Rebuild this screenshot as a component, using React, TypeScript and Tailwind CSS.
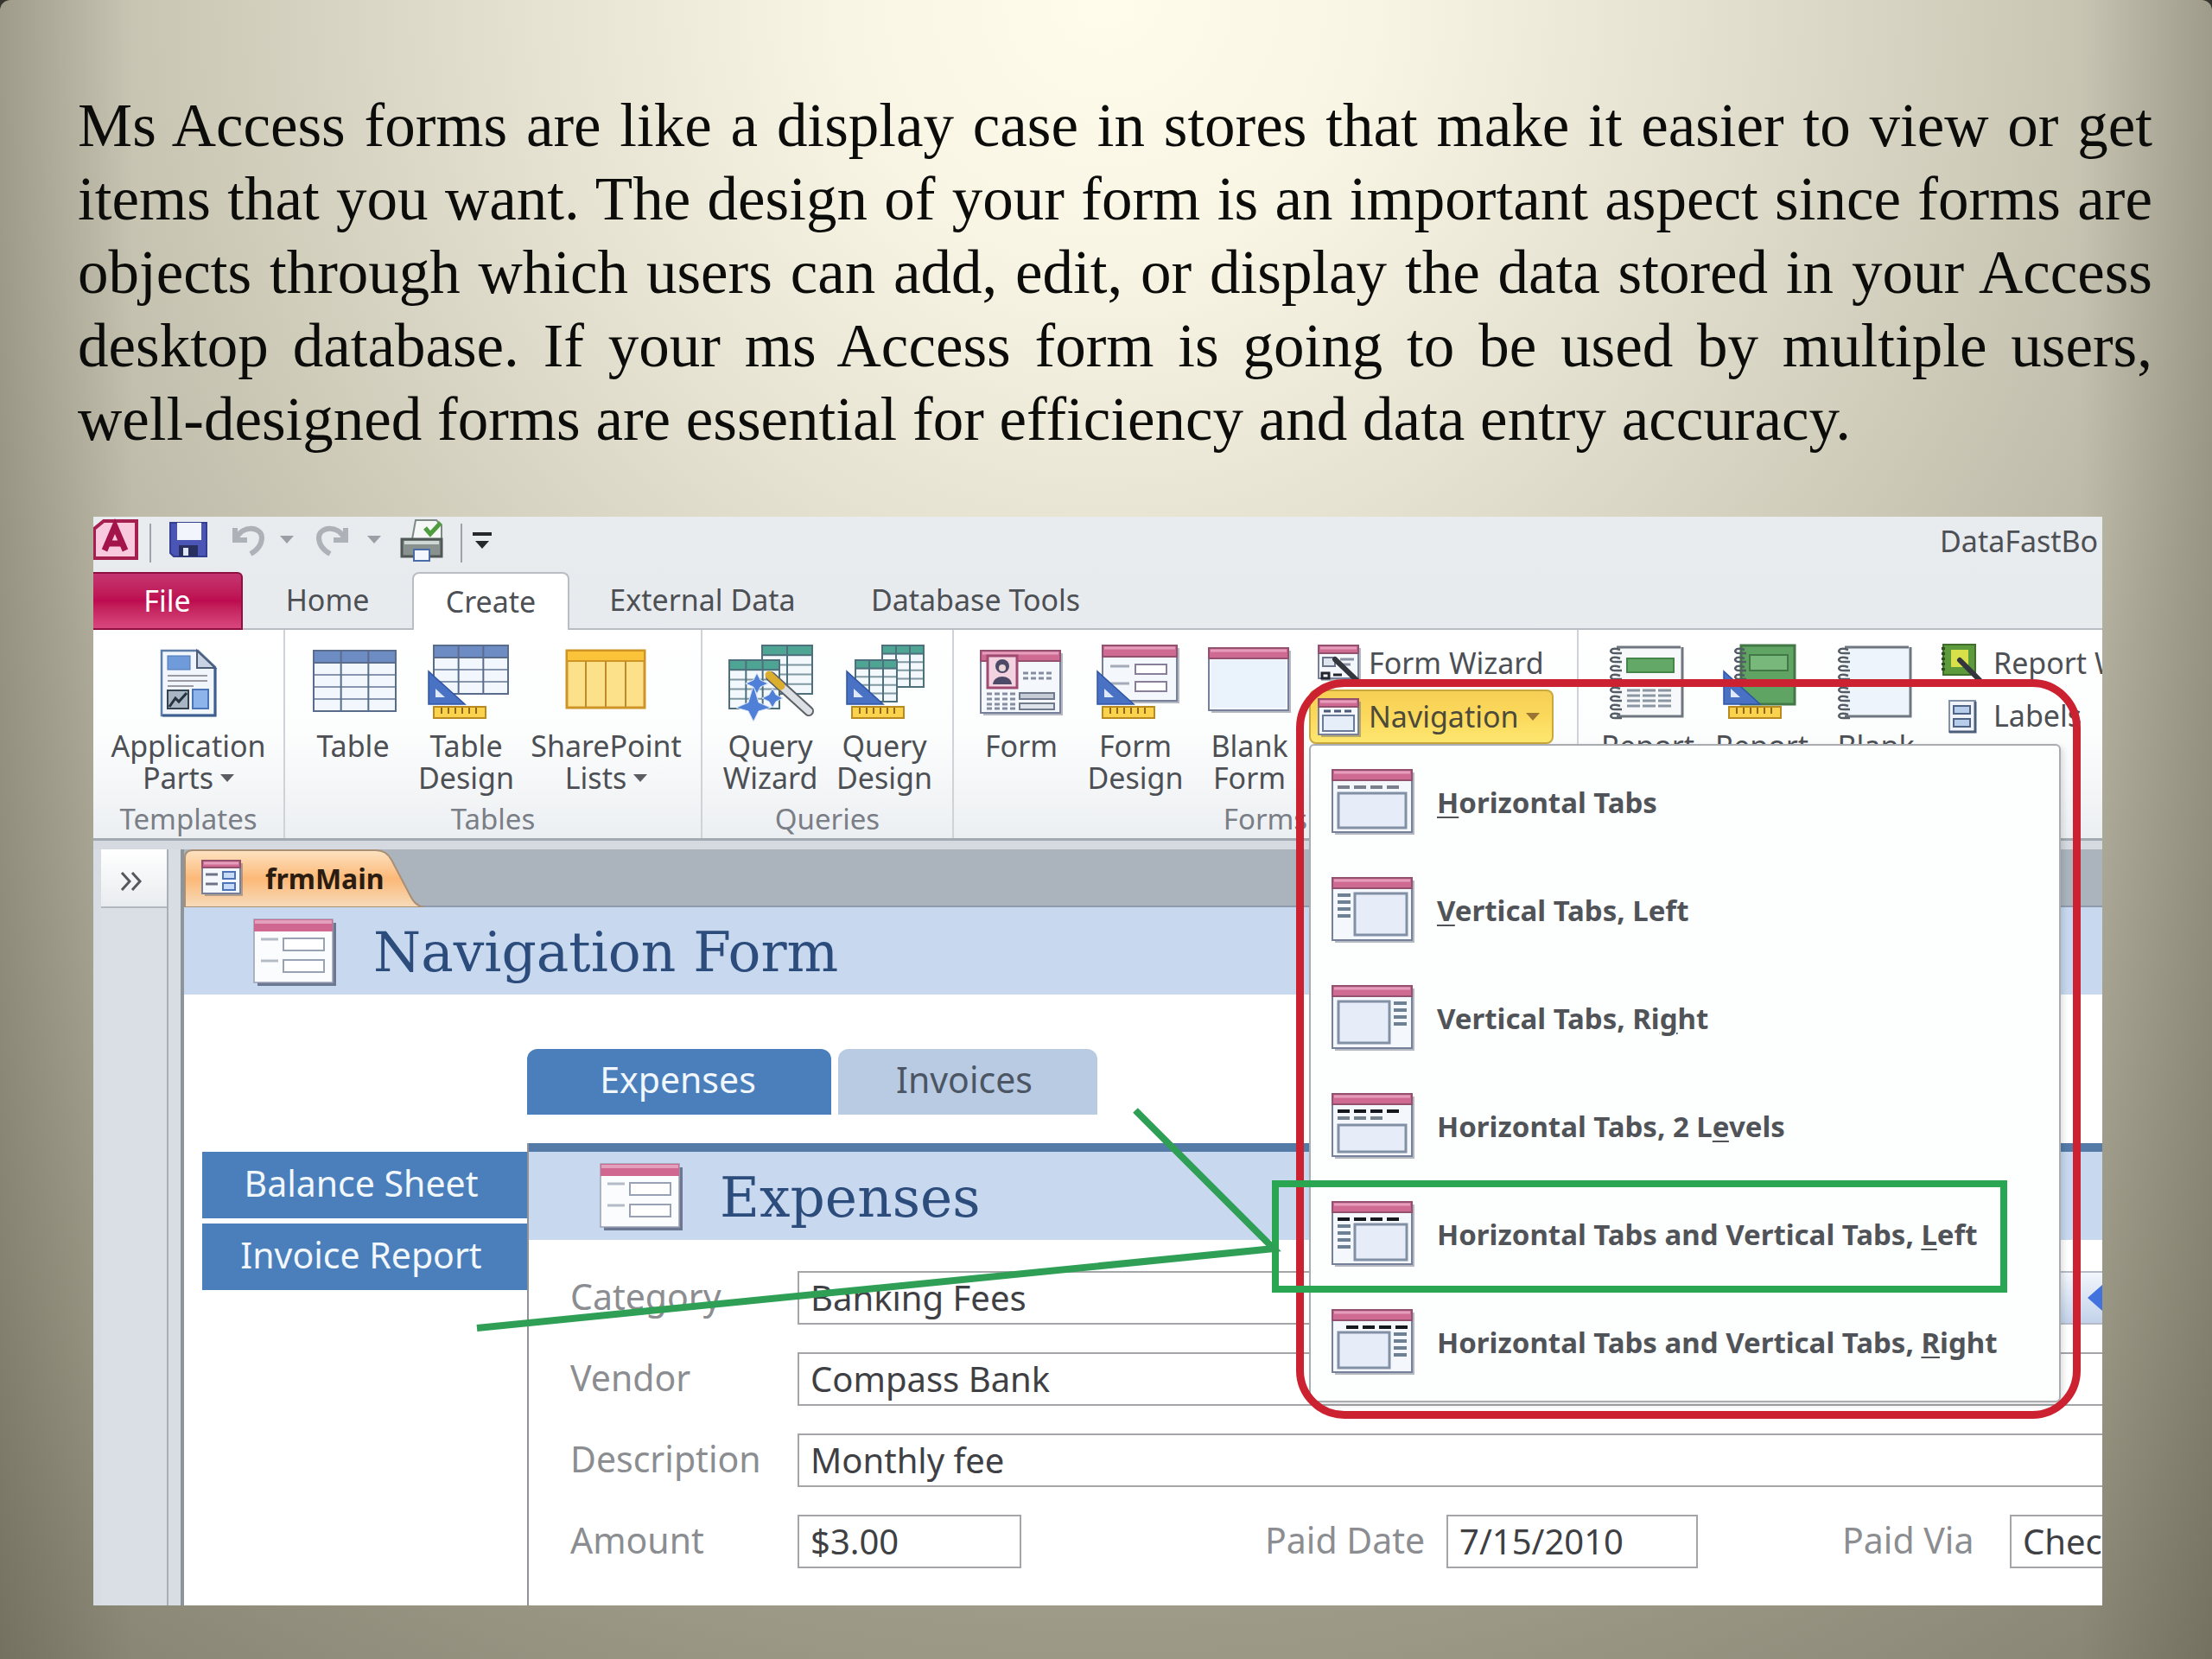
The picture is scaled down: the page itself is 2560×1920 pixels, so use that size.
import { useState, type ReactNode } from "react";

/* ---------- drawings ---------- */

function Grid({ x, y, w, h, cols, rows, head, line, body }: { x: number; y: number; w: number; h: number; cols: number; rows: number; head: string; line: string; body: string }) {
  const hh = h / (rows + 1);
  return (
    <g stroke={line} strokeWidth="2">
      <rect x={x} y={y} width={w} height={h} fill={body} />
      <rect x={x} y={y} width={w} height={hh} fill={head} />
      {Array.from({ length: cols - 1 }, (_, i) => (
        <path key={`c${i}`} d={`M${x + ((i + 1) * w) / cols} ${y}v${h}`} />
      ))}
      {Array.from({ length: rows - 1 }, (_, i) => (
        <path key={`r${i}`} d={`M${x} ${y + hh * (i + 2)}h${w}`} strokeOpacity="0.7" />
      ))}
    </g>
  );
}

function Ruler({ x }: { x: number }) {
  return (
    <g>
      <path d={`M${x - 6} 32v38h42z`} fill="#4a72c4" stroke="#2f55a4" strokeWidth="1.5" />
      <path d={`M${x + 2} 52v10h11z`} fill="#dfe9fb" />
      <rect x={x} y="73" width="60" height="13" fill="#fbd24e" stroke="#b98a1d" strokeWidth="2" />
      <path d={`M${x + 9} 74v7m8 -7v7m8 -7v7m8 -7v7m8 -7v7m8 -7v7`} stroke="#8c6a1a" strokeWidth="2" />
    </g>
  );
}

function Pink({ x, y, w, h, head }: { x: number; y: number; w: number; h: number; head: number }) {
  return (
    <g>
      <rect x={x + 3} y={y + 3} width={w} height={h} fill="#5b6478" opacity="0.45" />
      <rect x={x} y={y} width={w} height={h} fill="#f4f7fc" stroke="#76809a" strokeWidth="2" />
      <rect x={x} y={y} width={w} height={head} fill="#cf6b93" stroke="#94506f" strokeWidth="2" />
      <path d={`M${x + 2} ${y + 3}h${w - 4}`} stroke="#e59dbb" strokeWidth="3" />
    </g>
  );
}

const Big = ({ children }: { children: ReactNode }) => (
  <svg viewBox="0 0 104 90" className="h-[90px] w-[104px]" fill="none" aria-hidden="true">
    {children}
  </svg>
);

const AppPartsIcon = () => (
  <Big>
    <path d="M21 8h42l20 19v56H21z" fill="#f1f6fd" stroke="#5e7ea8" strokeWidth="2.5" />
    <path d="M62 8v20h21z" fill="#c9d3e4" stroke="#4c5b78" strokeWidth="2" />
    <path d="M83 28v55H22" stroke="#3d5f8f" strokeWidth="3" />
    <rect x="28" y="14" width="26" height="16" fill="#6f9bdb" stroke="#4a74b5" />
    <path d="M28 37h46M28 43h46M28 49h30" stroke="#9a9aa4" strokeWidth="2" />
    <rect x="28" y="54" width="24" height="21" fill="#a8b6c4" stroke="#34414f" strokeWidth="2" />
    <path d="M30 73l7-10 4 4 9-10" stroke="#26323d" strokeWidth="3" />
    <rect x="57" y="53" width="18" height="22" fill="#8db5ec" stroke="#4a74b5" strokeWidth="2" />
  </Big>
);
const TableIcon = () => (
  <Big><Grid x={6} y={8} w={95} h={70} cols={3} rows={4} head="#6d8cc4" line="#5a6c8c" body="#f2f7fd" /></Big>
);
const TableDesignIcon = () => (
  <Big>
    <Grid x={14} y={2} w={86} h={56} cols={3} rows={3} head="#6d8cc4" line="#5a6c8c" body="#f2f7fd" />
    <Ruler x={14} />
  </Big>
);
const SharePointIcon = () => (
  <Big>
    <rect x="6" y="8" width="90" height="66" fill="#fde08a" stroke="#cf9426" strokeWidth="3" />
    <rect x="6" y="8" width="90" height="12" fill="#fbc33a" stroke="#cf9426" strokeWidth="2" />
    <path d="M28 20v53M51 20v53M74 20v53" stroke="#c08a2a" strokeWidth="2" />
  </Big>
);
const QueryWizardIcon = () => (
  <Big>
    <Grid x={42} y={2} w={58} h={56} cols={2} rows={4} head="#4fa593" line="#4e6f7c" body="#f2f8fb" />
    <Grid x={4} y={19} w={58} h={56} cols={3} rows={4} head="#4fa593" line="#4e6f7c" body="#f2f8fb" />
    <path d="M32 48l6 20 14 6-14 4-6 12-6-12-14-4 14-6z" fill="#4f7fd6" stroke="#d8e6fb" />
    <path d="M36 34l4 8 9 4-9 4-4 8-4-8-9-4 9-4z" fill="#4f7fd6" stroke="#d8e6fb" />
    <path d="M54 52l4 7 8 4-8 4-4 7-4-7-8-4 8-4z" fill="#4f7fd6" stroke="#d8e6fb" />
    <path d="M52 38l44 40" stroke="#5b5f66" strokeWidth="12" strokeLinecap="round" />
    <path d="M52 38l44 40" stroke="#dcdfe4" strokeWidth="8" strokeLinecap="round" />
    <path d="M50 36l14 13" stroke="#dcae2e" strokeWidth="9" strokeLinecap="round" />
  </Big>
);
const QueryDesignIcon = () => (
  <Big>
    <Grid x={49} y={2} w={48} h={48} cols={3} rows={4} head="#4fa593" line="#4e6f7c" body="#f2f8fb" />
    <Grid x={18} y={19} w={48} h={48} cols={3} rows={4} head="#4fa593" line="#4e6f7c" body="#f2f8fb" />
    <Ruler x={14} />
  </Big>
);
const FormIcon = () => (
  <Big>
    <Pink x={5} y={8} w={92} h={72} head={12} />
    <rect x="13" y="14" width="34" height="37" fill="#f3d3e0" stroke="#a04a72" strokeWidth="3" />
    <circle cx="30" cy="26" r="8" fill="#4c4a66" />
    <circle cx="30" cy="28" r="4" fill="#e9d5d8" />
    <path d="M19 47c1-12 21-12 22 0z" fill="#4c4a66" />
    <path d="M54 34h34M54 40h34M12 58h34M12 64h34M12 70h34M12 75h34" stroke="#858da0" strokeWidth="3" strokeDasharray="6 3" />
    <rect x="50" y="57" width="40" height="7" fill="#c7cdd6" stroke="#6f7a8c" strokeWidth="2" />
    <rect x="50" y="69" width="40" height="7" fill="#dfe4ea" stroke="#6f7a8c" strokeWidth="2" />
  </Big>
);
const FormDesignIcon = () => (
  <Big>
    <Pink x={14} y={2} w={86} h={64} head={13} />
    <path d="M23 26h22M23 46h22" stroke="#a3aab8" strokeWidth="3" />
    <rect x="52" y="24" width="36" height="11" fill="#fff" stroke="#8a7f9a" strokeWidth="2" />
    <rect x="52" y="44" width="36" height="11" fill="#fff" stroke="#8a7f9a" strokeWidth="2" />
    <Ruler x={14} />
  </Big>
);
const BlankFormIcon = () => (
  <Big>
    <Pink x={5} y={5} w={92} h={72} head={12} />
    <rect x="8" y="19" width="86" height="55" fill="#eaf2fc" />
  </Big>
);

function Spiral() {
  return (
    <g stroke="#545c66" strokeWidth="2.5">
      {[7, 17, 27, 37, 52, 62, 72, 82].map((y) => (
        <path key={y} d={`M20 ${y}c-12 -4 -14 4 -6 4h8`} />
      ))}
    </g>
  );
}
const ReportIcon = () => (
  <Big>
    <path d="M16 4h76v80H16" fill="#f6f8fa" />
    <path d="M16 4h74M16 84h76V4" stroke="#6f7680" strokeWidth="3" />
    <rect x="28" y="17" width="54" height="16" fill="#63a866" stroke="#45854a" strokeWidth="2" />
    <path d="M28 46h52M28 54h52M28 60h52M28 66h52M28 72h52" stroke="#8c95a2" strokeWidth="3" strokeDasharray="15 3" />
    <Spiral />
  </Big>
);
const ReportDesignIcon = () => (
  <Big>
    <rect x="28" y="2" width="62" height="68" fill="#5fa463" stroke="#427846" strokeWidth="3" />
    <rect x="38" y="13" width="44" height="18" fill="#78b87a" stroke="#427846" strokeWidth="2" />
    <g transform="translate(12 0)" stroke="#545c66" strokeWidth="2.5">
      {[7, 17, 27, 37].map((y) => (
        <path key={y} d={`M20 ${y}c-12 -4 -14 4 -6 4h8`} />
      ))}
    </g>
    <Ruler x={14} />
  </Big>
);
const BlankReportIcon = () => (
  <Big>
    <path d="M16 4h76v80H16" fill="#eef4fb" />
    <path d="M16 4h74M16 84h76V4" stroke="#6f7680" strokeWidth="3" />
    <Spiral />
  </Big>
);

const FormWizardIcon = () => (
  <svg viewBox="0 0 50 46" className="h-[46px] w-[50px]" fill="none" aria-hidden="true">
    <Pink x={1} y={2} w={46} h={38} head={9} />
    <rect x="6" y="16" width="14" height="10" fill="#dfe5ee" stroke="#6b7488" strokeWidth="2" />
    <path d="M26 18h16M26 24h12" stroke="#8a92a4" strokeWidth="3" />
    <path d="M5 34h8v6H5zM18 36h10" stroke="#22252c" strokeWidth="3" />
    <path d="M20 18l27 26" stroke="#33363c" strokeWidth="6" strokeLinecap="round" />
  </svg>
);
const NavSmallIcon = () => (
  <svg viewBox="0 0 50 46" className="h-[46px] w-[50px]" fill="none" aria-hidden="true">
    <Pink x={1} y={2} w={46} h={41} head={9} />
    <path d="M7 16h34" stroke="#4a5a78" strokeWidth="3" strokeDasharray="8 4" />
    <rect x="6" y="21" width="36" height="18" fill="#e6eefa" stroke="#6b7c9a" strokeWidth="2" />
  </svg>
);
const ReportWizardIcon = () => (
  <svg viewBox="0 0 50 46" className="h-[46px] w-[50px]" fill="none" aria-hidden="true">
    <rect x="4" y="2" width="37" height="35" fill="#5d9a3c" stroke="#3f6f2a" strokeWidth="2" />
    <rect x="13" y="8" width="20" height="20" fill="#d8e04a" />
    <path d="M4 5v30" stroke="#2f4f20" strokeWidth="4" strokeDasharray="3 3" />
    <path d="M23 20l23 23" stroke="#33363c" strokeWidth="6" strokeLinecap="round" />
  </svg>
);
const LabelsIcon = () => (
  <svg viewBox="0 0 50 46" className="h-[46px] w-[50px]" fill="none" aria-hidden="true">
    <rect x="11" y="5" width="30" height="36" fill="#f0f4fa" stroke="#8091a8" strokeWidth="2" />
    <path d="M41 6v35H11" stroke="#4c5f7a" strokeWidth="3" />
    <rect x="16" y="11" width="19" height="9" fill="#b8cdea" stroke="#4e6486" strokeWidth="2" />
    <rect x="16" y="26" width="19" height="9" fill="#b8cdea" stroke="#4e6486" strokeWidth="2" />
  </svg>
);

type Layout = { tabs?: number[]; tabs2?: number[]; rows?: [number, number, number]; box: [number, number, number, number]; dark?: boolean };
function LayoutIcon({ tabs, tabs2, rows, box, dark }: Layout) {
  return (
    <svg viewBox="0 0 96 78" className="h-[78px] w-24" fill="none" aria-hidden="true">
      <Pink x={1} y={1} w={92} h={72} head={12} />
      {tabs?.map((x) => <path key={x} d={`M${x} 21h14`} stroke={dark ? "#15181f" : "#7a7f8e"} strokeWidth="4" />)}
      {tabs2?.map((x) => <path key={x} d={`M${x} 29h14`} stroke="#76828e" strokeWidth="4" />)}
      {rows &&
        Array.from({ length: rows[2] }, (_, i) => (
          <path key={i} d={`M${rows[0]} ${rows[1] + i * 8}h15`} stroke="#6d8094" strokeWidth="4" />
        ))}
      <rect x={box[0]} y={box[1]} width={box[2]} height={box[3]} fill="#e6edf8" stroke="#8290a6" strokeWidth="3" />
    </svg>
  );
}

const HeaderFormIcon = () => (
  <svg viewBox="0 0 100 80" className="h-20 w-[100px]" fill="none" aria-hidden="true">
    <rect x="7" y="6" width="91" height="73" fill="#44506a" opacity="0.7" />
    <rect x="3" y="2" width="91" height="73" fill="#fbfcfe" stroke="#9aa0b4" strokeWidth="1.5" />
    <rect x="3" y="2" width="91" height="14" fill="#cf6790" />
    <path d="M4 5h89" stroke="#e3a0bb" strokeWidth="4" />
    <path d="M11 25h20M11 50h20" stroke="#b4bac6" strokeWidth="3" />
    <rect x="37" y="24" width="47" height="14" fill="#fff" stroke="#98a2b4" strokeWidth="2" />
    <rect x="37" y="49" width="47" height="14" fill="#fff" stroke="#98a2b4" strokeWidth="2" />
  </svg>
);

const Caret = ({ color = "#5a5d62" }: { color?: string }) => (
  <svg viewBox="0 0 16 9" className="h-[9px] w-4 shrink-0" aria-hidden="true">
    <path d="M0 0h16l-8 9z" fill={color} />
  </svg>
);

/* ---------- ribbon ---------- */

function BigButton({ icon, lines, width, caret }: { icon: ReactNode; lines: string[]; width: string; caret?: boolean }) {
  return (
    <button type="button" className={`flex ${width} shrink-0 flex-col items-center whitespace-nowrap pt-[16px] text-[34px] leading-[37px] text-[#4c4f54]`}>
      {icon}
      <span className="mt-[10px]">{lines[0]}</span>
      {lines[1] && (
        <span className="flex items-center gap-2">
          {lines[1]}
          {caret && <Caret />}
        </span>
      )}
    </button>
  );
}

function Group({ label, width, children }: { label: string; width: string; children: ReactNode }) {
  return (
    <section aria-label={label} className={`flex ${width} shrink-0 flex-col border-r-2 border-[#cfd3d8]`}>
      <div className="flex h-[197px] justify-center">{children}</div>
      <h3 className="text-center text-[33px] leading-[44px] text-[#7a7e86]">{label}</h3>
    </section>
  );
}

const MENU: { before: string; key: string; after: string; icon: Layout }[] = [
  { before: "", key: "H", after: "orizontal Tabs", icon: { tabs: [7, 26, 45, 64], box: [8, 28, 78, 40] } },
  { before: "", key: "V", after: "ertical Tabs, Left", icon: { rows: [7, 21, 4], box: [27, 19, 60, 48] } },
  { before: "Vertical Tabs, Ri", key: "g", after: "ht", icon: { rows: [72, 21, 4], box: [8, 19, 59, 48] } },
  { before: "Horizontal Tabs, 2 L", key: "e", after: "vels", icon: { tabs: [7, 26, 45, 64], dark: true, tabs2: [7, 26, 45], box: [8, 37, 78, 31] } },
  { before: "Horizontal Tabs and Vertical Tabs, ", key: "L", after: "eft", icon: { tabs: [7, 26, 45, 64], dark: true, rows: [7, 29, 4], box: [27, 27, 60, 41] } },
  { before: "Horizontal Tabs and Vertical Tabs, ", key: "R", after: "ight", icon: { tabs: [17, 36, 55, 74], dark: true, rows: [72, 29, 4], box: [8, 27, 59, 41] } },
];

function NavigationMenu() {
  return (
    <div className="relative z-10">
      <button type="button" aria-haspopup="menu" aria-expanded="true" className="flex h-[63px] w-[283px] items-center rounded-lg border-2 border-[#c9a93c] bg-linear-to-b from-[#f6cf55] via-[#fbd95c] to-[#fde76f] pl-[8px] text-[34px] text-[#4c4a3a]">
        <NavSmallIcon />
        <span className="mr-2 ml-[9px]">Navigation</span>
        <Caret color="#9a7433" />
      </button>
      <ul role="menu" className="absolute top-full left-0 h-[762px] w-[870px] rounded-md border-2 border-[#a9adb2] bg-[#fdfefe] pt-[3px] shadow-[3px_3px_6px_rgba(0,0,0,0.12)]">
        {MENU.map((m) => (
          <li key={m.before + m.key + m.after} role="none">
            <button type="button" role="menuitem" className="flex h-[125px] w-full items-center pl-[24px] text-left text-[33px] font-bold whitespace-nowrap text-[#505357]">
              <LayoutIcon {...m.icon} />
              <span className="ml-[26px]">
                {m.before}
                <u className="underline decoration-2 underline-offset-4">{m.key}</u>
                {m.after}
              </span>
            </button>
          </li>
        ))}
      </ul>
    </div>
  );
}

function Ribbon() {
  return (
    <div className="flex h-[244px] border-b-[3px] border-[#a4aab1] bg-linear-to-b from-white via-[#fcfdfd] to-[#eceff2]">
      <Group label="Templates" width="w-[222px]">
        <BigButton icon={<AppPartsIcon />} lines={["Application", "Parts"]} width="w-[220px]" caret />
      </Group>
      <Group label="Tables" width="w-[483px]">
        <BigButton icon={<TableIcon />} lines={["Table"]} width="w-[132px]" />
        <BigButton icon={<TableDesignIcon />} lines={["Table", "Design"]} width="w-[130px]" />
        <BigButton icon={<SharePointIcon />} lines={["SharePoint", "Lists"]} width="w-[194px]" caret />
      </Group>
      <Group label="Queries" width="w-[291px]">
        <BigButton icon={<QueryWizardIcon />} lines={["Query", "Wizard"]} width="w-[132px]" />
        <BigButton icon={<QueryDesignIcon />} lines={["Query", "Design"]} width="w-[132px]" />
      </Group>
      <Group label="Forms" width="w-[723px]">
        <BigButton icon={<FormIcon />} lines={["Form"]} width="w-[132px]" />
        <BigButton icon={<FormDesignIcon />} lines={["Form", "Design"]} width="w-[132px]" />
        <BigButton icon={<BlankFormIcon />} lines={["Blank", "Form"]} width="w-[132px]" />
        <div className="ml-[3px] flex w-[298px] flex-col">
          <button type="button" className="mt-[10px] flex h-[59px] items-center gap-[9px] pb-[2px] pl-[10px] text-[34px] whitespace-nowrap text-[#4c4f54]">
            <FormWizardIcon />
            Form Wizard
          </button>
          <NavigationMenu />
        </div>
      </Group>
      <section aria-label="Reports" className="flex pl-[14px]">
        <BigButton icon={<ReportIcon />} lines={["Report"]} width="w-[132px]" />
        <BigButton icon={<ReportDesignIcon />} lines={["Report", "Design"]} width="w-[132px]" />
        <BigButton icon={<BlankReportIcon />} lines={["Blank", "Report"]} width="w-[132px]" />
        <div className="ml-[8px] flex flex-col text-[34px] whitespace-nowrap text-[#4c4f54]">
          <button type="button" className="mt-[8px] flex h-[60px] items-center gap-[12px]">
            <ReportWizardIcon />
            Report Wizard
          </button>
          <button type="button" className="flex h-[63px] items-center gap-[12px]">
            <LabelsIcon />
            Labels
          </button>
        </div>
      </section>
    </div>
  );
}

function TitleBar() {
  return (
    <div className="flex h-16 items-center">
      <svg viewBox="0 0 480 64" className="h-16 w-[480px]" fill="none" aria-hidden="true">
        <path d="M12 5h38v43H1V14z" fill="#f9c9dd" stroke="#a5204f" strokeWidth="4" />
        <path d="M13 39l12-28 12 28M17 31h16" stroke="#a3154a" strokeWidth="7" />
        <path d="M66 8v45M426 8v45" stroke="#9ca3ab" strokeWidth="2" />
        <path d="M89 7h42v39H93l-4-4z" fill="#4a55b5" stroke="#343f92" strokeWidth="2" />
        <path d="M97 7h28v20H97z" fill="#f2f5fc" />
        <path d="M99 33h22v13H99z" fill="#27305f" />
        <path d="M104 36h6v9h-6z" fill="#dfe6f7" />
        <path d="M164 13v14h14M165 26c8-18 30-14 30-2 0 8-4 14-13 19" stroke="#adb2b8" strokeWidth="6" />
        <path d="M292 13v14h-14M291 26c-8-18-30-14-30-2 0 8 4 14 13 19" stroke="#adb2b8" strokeWidth="6" />
        <path d="M216 22h16l-8 9zM317 22h16l-8 9z" fill="#9ba0a6" />
        <path d="M373 4h24l6 6v16h-34z" fill="#f5f8f6" stroke="#7d8a84" strokeWidth="2" />
        <path d="M384 13l6 7 12-13" stroke="#4f9d3e" strokeWidth="5" />
        <path d="M357 26h46v20h-46z" fill="#8a928f" stroke="#4f5856" strokeWidth="3" />
        <path d="M360 30h40" stroke="#cfd6d3" strokeWidth="4" />
        <rect x="371" y="38" width="18" height="13" fill="#f3f7ff" stroke="#4a6da8" strokeWidth="2" />
        <path d="M439 20h22" stroke="#26282b" strokeWidth="4" />
        <path d="M442 28h16l-8 9z" fill="#26282b" />
      </svg>
      <span className="mb-2 ml-auto w-[188px] overflow-hidden text-[34px] whitespace-nowrap text-[#4c4f54]">DataFastBo</span>
    </div>
  );
}

const TABS: [string, string][] = [
  ["Home", "w-[196px]"],
  ["Create", "w-[182px]"],
  ["External Data", "w-[308px]"],
  ["Database Tools", "w-[324px]"],
];

function RibbonTabs() {
  return (
    <nav className="flex h-[67px] text-[34px] whitespace-nowrap text-[#4c4f54]">
      <button type="button" className="w-[173px] rounded-tr-md border-2 border-l-0 border-[#8f0f42] bg-linear-to-b from-[#c43470] via-[#bd0a50] to-[#d8467e] text-white">
        File
      </button>
      {TABS.map(([t, w]) => (
        <button key={t} type="button" className={`${w} border-[#b9bec4] ${t === "Create" ? "rounded-t-lg border-x-2 border-t-2 bg-white" : "border-b-2"}`}>
          {t}
        </button>
      ))}
      <span className="flex-1 border-b-2 border-[#b9bec4]" />
    </nav>
  );
}

/* ---------- form ---------- */

const labelCls = "shrink-0 text-[41px] leading-[58px] text-[#8b8d91]";
const inputCls = "h-[62px] min-w-0 border-2 border-[#a3a5a8] bg-white pb-[2px] pl-[13px] text-[40px] text-[#3e4043] outline-none";

function Field({ id, label, value, children }: { id: string; label: string; value: string; children?: ReactNode }) {
  const [v, setV] = useState(value);
  return (
    <div className="flex">
      <label htmlFor={id} className={`${labelCls} w-[263px]`}>{label}</label>
      <input id={id} value={v} onChange={(e) => setV(e.target.value)} className={`${inputCls} ${id === "amount" ? "w-[259px]" : "-mr-1 flex-1"}`} />
      {children}
    </div>
  );
}

function ExpensesForm() {
  return (
    <div className="flex flex-col gap-8 pt-9 pl-[48px]">
      <Field id="category" label="Category" value="Banking Fees">
        <button type="button" aria-label="Previous" className="flex h-[62px] w-[60px] items-center justify-end border-y-2 border-[#b5bcc8] bg-linear-to-b from-[#f2f6fc] to-[#c3d2ea]">
          <svg viewBox="0 0 17 32" className="h-8 w-[17px]" aria-hidden="true">
            <path d="M0 16L17 1v30z" fill="#4272dd" />
          </svg>
        </button>
      </Field>
      <Field id="vendor" label="Vendor" value="Compass Bank" />
      <Field id="description" label="Description" value="Monthly fee" />
      <Field id="amount" label="Amount" value="$3.00">
        <label htmlFor="paid-date" className={`${labelCls} ml-[282px] w-[210px]`}>Paid Date</label>
        <input id="paid-date" defaultValue="7/15/2010" className={`${inputCls} w-[291px]`} />
        <label htmlFor="paid-via" className={`${labelCls} ml-[167px] w-[194px]`}>Paid Via</label>
        <input id="paid-via" defaultValue="Check" className={`${inputCls} flex-1 border-r-0`} />
      </Field>
    </div>
  );
}

function Document() {
  return (
    <div className="flex flex-1 border-t-[10px] border-[#d5dae0] bg-[#d8dde3]">
      <aside className="flex w-[105px] shrink-0 border-r-4 border-[#8d949b] pr-[14px] pl-[9px]">
        <div className="flex flex-1 flex-col border-r-2 border-[#a9afb6] bg-[#dadfe6]">
          <button type="button" aria-label="Open navigation pane" className="flex h-[68px] items-center justify-center border-b-2 border-[#b2b8bf] bg-linear-to-b from-white to-[#e9ecef] pt-2 pr-1">
            <svg viewBox="0 0 28 22" className="h-[22px] w-7" fill="none" stroke="#55585d" strokeWidth="3" aria-hidden="true">
              <path d="M2 1l9 10-9 10M14 1l9 10-9 10" />
            </svg>
          </button>
        </div>
      </aside>
      <div className="flex min-w-0 flex-1 flex-col bg-white">
        <div className="h-[67px] border-b-2 border-[#8f9bad] bg-[#abb3bd]">
          <button type="button" className="relative flex h-[67px] w-[278px] items-center text-[32px] font-bold text-[#2a1c10]">
            <svg viewBox="0 0 278 67" className="absolute inset-0 h-[67px] w-[278px]" aria-hidden="true">
              <defs>
                <linearGradient id="docTab" x1="0" y1="0" x2="0" y2="1">
                  <stop offset="0" stopColor="#fde3c2" />
                  <stop offset="0.5" stopColor="#fcb877" />
                  <stop offset="1" stopColor="#f6dcbc" />
                </linearGradient>
              </defs>
              <path d="M1 67V10Q1 1 10 1H222Q234 1 240 12L262 54Q268 66 278 67z" fill="url(#docTab)" stroke="#a98f73" strokeWidth="2" />
            </svg>
            <svg viewBox="0 0 50 44" className="relative ml-5 h-11 w-[50px]" fill="none" aria-hidden="true">
              <Pink x={1} y={1} w={44} h={38} head={8} />
              <path d="M5 17h14M5 28h14" stroke="#6c7486" strokeWidth="3" />
              <rect x="25" y="14" width="14" height="8" fill="#c9dcf7" stroke="#4d73b8" strokeWidth="2" />
              <rect x="25" y="27" width="14" height="8" fill="#c9dcf7" stroke="#4d73b8" strokeWidth="2" />
            </svg>
            <span className="relative ml-6">frmMain</span>
          </button>
        </div>
        <header className="flex h-[101px] items-center bg-[#c8d8ef] pt-[2px] pl-[78px] text-[#2c4c7c]">
          <HeaderFormIcon />
          <h1 className="mt-1 ml-[41px] font-[DejaVu_Serif,serif] text-[63px]">Navigation Form</h1>
        </header>
        <div className="flex gap-2 pt-[63px] pl-[397px] text-[41px]">
          <button type="button" className="h-[76px] w-[352px] rounded-t-xl bg-[#4a7fbc] pr-[3px] pb-1 text-[#f2f7fc]">Expenses</button>
          <button type="button" className="h-[76px] w-[300px] rounded-t-xl bg-[#b8cbe3] pr-2 pb-1 text-[#4b5564]">Invoices</button>
        </div>
        <div className="mt-[33px] flex flex-1">
          <nav className="flex w-[397px] shrink-0 flex-col gap-[6px] pt-[10px] pl-[21px] text-[41px] text-[#f2f7fc]">
            <button type="button" className="h-[77px] bg-[#4a7fbc] pr-2 pb-1">Balance Sheet</button>
            <button type="button" className="h-[77px] bg-[#4a7fbc] pr-2 pb-1">Invoice Report</button>
          </nav>
          <section className="flex min-w-0 flex-1 flex-col border-l-2 border-[#8f9296]">
            <header className="flex h-[112px] items-center border-t-[10px] border-[#547ba8] bg-[#c8d8ef] pt-[2px] pl-[80px] text-[#2c4c7c]">
              <HeaderFormIcon />
              <h2 className="mt-1 ml-[41px] font-[DejaVu_Serif,serif] text-[63px]">Expenses</h2>
            </header>
            <ExpensesForm />
          </section>
        </div>
      </div>
    </div>
  );
}

function Annotations() {
  return (
    <div className="pointer-events-none absolute inset-0 z-20">
      <div className="absolute top-[188px] left-[1392px] h-[856px] w-[908px] rounded-[56px] border-[9px] border-[#cb2130]" />
      <div className="absolute top-[768px] left-[1364px] h-[130px] w-[851px] border-8 border-[#2aa653]" />
      <svg viewBox="0 0 1000 300" className="absolute top-[667px] left-[400px] h-[300px] w-[1000px]" fill="none" stroke="#2f9f56" strokeWidth="8" aria-hidden="true">
        <path d="M806 20L966 180L44 272" />
      </svg>
    </div>
  );
}

export default function App() {
  return (
    <div className="bg-[#35342d]">
      <main className="flex min-h-screen flex-col rounded-t-xl bg-[linear-gradient(90deg,rgba(70,66,50,0.26)_0%,rgba(70,66,50,0)_6%,rgba(70,66,50,0)_94%,rgba(70,66,50,0.26)_100%),radial-gradient(ellipse_100%_130%_at_50%_0%,#fffceb_0%,#f8f5e5_12%,#e6e2d2_26%,#cfccba_40%,#b5b2a1_55%,#9b9886_77%,#858170_92%)] pt-[103px] pr-[127px] pb-[62px] pl-[108px] font-[Noto_Sans,sans-serif]">
        <p className="-mr-[58px] -ml-[18px] text-justify font-[Liberation_Serif,serif] text-[71px] leading-[85px] text-[#0c0c0a]">
          Ms Access forms are like a display case in stores that make it easier to view or get items that you want. The design of your form is an important aspect since forms are objects through which users can add, edit, or display the data stored in your Access desktop database. If your ms Access form is going to be used by multiple users, <span className="whitespace-nowrap">well-designed</span> forms are essential for efficiency and data entry accuracy.
        </p>
        <div className="relative mt-[70px] flex flex-1 flex-col overflow-hidden bg-linear-to-b from-[#e9ecef] to-[#dfe3e7]">
          <TitleBar />
          <RibbonTabs />
          <Ribbon />
          <Document />
          <Annotations />
        </div>
      </main>
    </div>
  );
}
